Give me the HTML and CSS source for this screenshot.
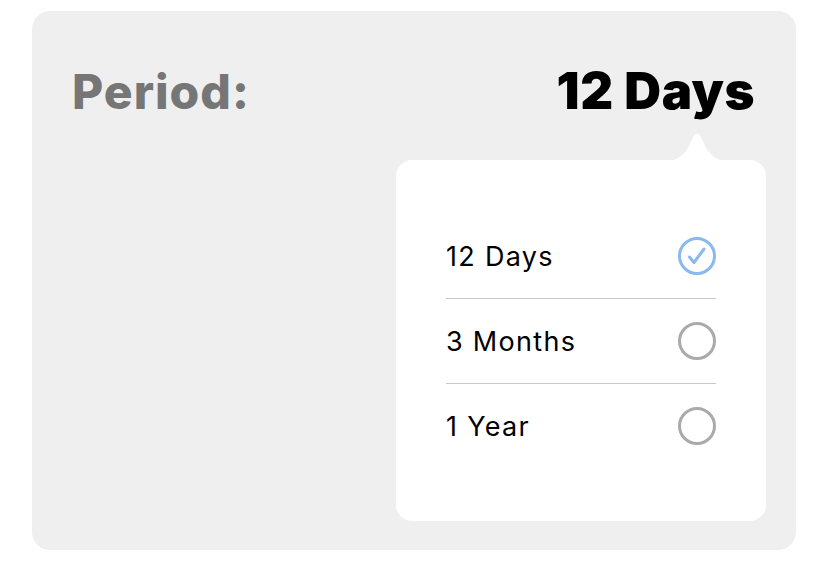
FILE: index.html
```html
<!DOCTYPE html>
<html lang="en">
<head>
    <meta charset="UTF-8">
    <meta name="viewport" content="width=device-width, initial-scale=1.0">
    <title>Period Picker</title>
    <link rel="stylesheet" href="styles.css">
</head>
<body>
    <div class="card">
        <div class="header">
            <span class="label">Period:</span>
            <span class="value">12 Days</span>
        </div>

        <div class="popover">
            <svg class="arrow" width="60" height="31" viewBox="0 0 60 31">
                <path d="M0 31 C10 31 16 25 21 18 L26 7 Q30 0 34 7 L39 18 C44 25 50 31 60 31 Z" fill="#fff"/>
            </svg>
            <ul class="options">
                <li class="option selected">
                    <span>12 Days</span>
                    <svg class="radio" width="40" height="40" viewBox="0 0 40 40">
                        <circle cx="20" cy="20" r="17.5" fill="none" stroke="#8ab9ef" stroke-width="3"/>
                        <path d="M12.5 21 L17 26.5 L27 13" fill="none" stroke="#8ab9ef" stroke-width="3" stroke-linecap="round" stroke-linejoin="round"/>
                    </svg>
                </li>
                <li class="option">
                    <span>3 Months</span>
                    <svg class="radio" width="40" height="40" viewBox="0 0 40 40">
                        <circle cx="20" cy="20" r="17.5" fill="none" stroke="#aaaaaa" stroke-width="3"/>
                    </svg>
                </li>
                <li class="option">
                    <span>1 Year</span>
                    <svg class="radio" width="40" height="40" viewBox="0 0 40 40">
                        <circle cx="20" cy="20" r="17.5" fill="none" stroke="#aaaaaa" stroke-width="3"/>
                    </svg>
                </li>
            </ul>
        </div>
    </div>
</body>
</html>
```

FILE: styles.css
```css
body {
    margin: 0;
    background-color: #fff;
    font-family: Inter, "Noto Sans", sans-serif;
}

.card {
    position: relative;
    margin: 11px 0 0 32px;
    width: 764px;
    height: 539px;
    background-color: #efefef;
    border-radius: 18px;
}

.header {
    display: flex;
    justify-content: space-between;
    align-items: baseline;
    padding: 49px 41px 0 40px;
}

.label {
    font-size: 48px;
    font-weight: 800;
    letter-spacing: 1px;
    color: #767676;
}

.value {
    font-size: 51px;
    font-weight: 900;
    letter-spacing: 0.5px;
    color: #000;
}

.popover {
    position: absolute;
    left: 364px;
    top: 149px;
    width: 370px;
    height: 361px;
    background-color: #fff;
    border-radius: 16px;
}

.arrow {
    position: absolute;
    left: 271px;
    top: -30px;
}

.options {
    list-style: none;
    margin: 0;
    padding: 54px 50px 0 50px;
}

.option {
    display: flex;
    justify-content: space-between;
    align-items: center;
    height: 84px;
    font-size: 27px;
    letter-spacing: 1.3px;
    color: #000;
}

.option + .option {
    border-top: 1px solid #c8c8c8;
}

.radio {
    margin-right: -1px;
}
```
